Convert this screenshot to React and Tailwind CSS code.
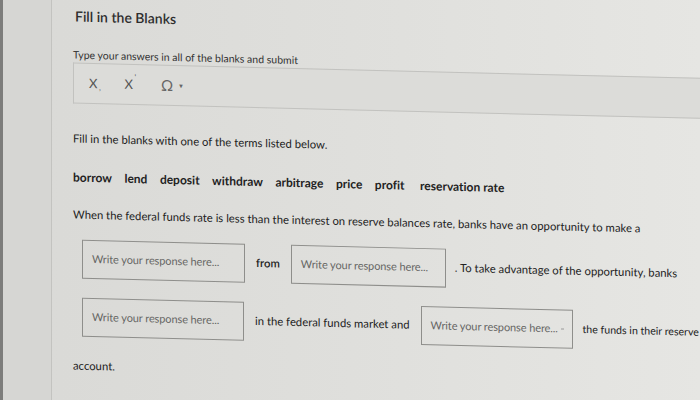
import React from "react";

const terms = ["borrow", "lend", "deposit", "withdraw", "arbitrage", "price", "profit", "reservation rate"];

function Blank({ width, handle }) {
  return (
    <div
      className={`${width} h-[39px] shrink-0 border border-[#8e8e8b] flex items-center pl-[9px] pr-[8px] justify-between`}
    >
      <span className="text-[11px] text-[#666664] tracking-[-0.1px]">Write your response here...</span>
      {handle && <span className="w-[3px] h-[1px] bg-[#999]" />}
    </div>
  );
}

export default function App() {
  return (
    <div
      className="w-[700px] h-[400px] overflow-hidden flex bg-gradient-to-r from-[#d9d9d6] via-[#dfdfdc] to-[#e6e6e3] text-[#222] [font-variant-ligatures:none]"
      style={{ fontFamily: "Lato, 'Open Sans', sans-serif" }}
    >
      {/* left rail */}
      <div className="w-[52px] shrink-0 flex">
        <div className="w-[3px] bg-[#7d7d7b]" />
        <div className="flex-1 bg-[#d6d6d3] border-r border-[#c3c3c0]" />
      </div>

      <div className="flex-1 pl-[21px] origin-top-left skew-y-[1.4deg]">
        <h1 className="pt-[6px] text-[14px] leading-[20px] font-semibold text-[#2e2e2e] pl-[2px]">Fill in the Blanks</h1>
        <p className="mt-[20px] text-[10.5px] leading-[16px] text-[#333]">
          Type your answers in all of the blanks and submit
        </p>

        {/* toolbar */}
        <div className="h-[41px] border border-r-0 border-[#c2c2bf] bg-[#dcdcd9] flex items-center gap-[25px] pl-[15px] text-[#555]">
          <span className="text-[13px] relative">
            X<span className="absolute left-[10px] top-[7px] text-[8px]">,</span>
          </span>
          <span className="text-[13px] relative ml-[2px]">
            X<span className="absolute left-[10px] top-[-4px] text-[8px]">'</span>
          </span>
          <span className="flex items-center gap-[5px] ml-[3px] text-[15px] text-[#666]">
            Ω<span className="text-[6px]">▼</span>
          </span>
        </div>

        <p className="mt-[27px] text-[11.3px] leading-[16px]">Fill in the blanks with one of the terms listed below.</p>

        <div className="mt-[23px] flex gap-[12.5px] text-[12px] leading-[16px] font-bold">
          {terms.map((t, i) => (
            <span key={t} className={i === 7 ? "ml-[3px]" : ""}>
              {t}
            </span>
          ))}
        </div>

        <p className="mt-[21px] text-[11.3px] leading-[16px] whitespace-nowrap">
          When the federal funds rate is less than the interest on reserve balances rate, banks have an opportunity to make a
        </p>

        <div className="mt-[17px] ml-[9px] flex items-center text-[11.3px] whitespace-nowrap">
          <Blank width="w-[163px]" />
          <span className="mx-[11px] font-semibold">from</span>
          <Blank width="w-[155px]" />
          <span className="ml-[9px]">. To take advantage of the opportunity, banks</span>
        </div>

        <div className="mt-[19px] ml-[9px] flex items-center text-[11.3px] whitespace-nowrap">
          <Blank width="w-[162px]" />
          <span className="mx-[11px]">in the federal funds market and</span>
          <Blank width="w-[152px]" handle />
          <span className="ml-[10px] text-[10.6px]">the funds in their reserve</span>
        </div>

        <p className="mt-[21px] text-[11.3px] leading-[16px]">account.</p>
      </div>
    </div>
  );
}
